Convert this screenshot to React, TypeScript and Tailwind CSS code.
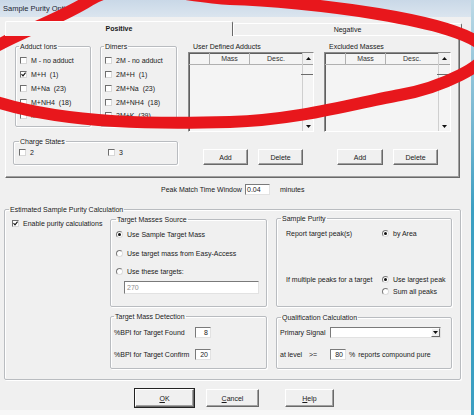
import React from "react";

function CheckBox({ checked, label }: { checked?: boolean; label?: string }) {
  return (
    <div className="flex items-center h-[9px]">
      <span className="flex items-center justify-center w-[7px] h-[7px] bg-white border border-t-[#6e6e6e] border-l-[#6e6e6e] border-r-[#d8d8d8] border-b-[#d8d8d8]">
        {checked && (
          <svg width="5" height="5" viewBox="0 0 5 5">
            <path d="M0.5 2.2 L2 3.8 L4.6 0.6" fill="none" stroke="#111" strokeWidth="1.1" />
          </svg>
        )}
      </span>
      {label && <span className="ml-[4px] whitespace-pre">{label}</span>}
    </div>
  );
}

function Radio({ checked, label }: { checked?: boolean; label?: string }) {
  return (
    <div className="flex items-center h-[9px]">
      <span className="flex items-center justify-center w-[7px] h-[7px] rounded-full bg-white border border-t-[#7a7a7a] border-l-[#7a7a7a] border-r-[#dcdcdc] border-b-[#dcdcdc]">
        {checked && <span className="w-[3px] h-[3px] rounded-full bg-[#111]" />}
      </span>
      {label && <span className="ml-[4px] whitespace-pre">{label}</span>}
    </div>
  );
}

function Btn({ label, className, focus }: { label: React.ReactNode; className: string; focus?: boolean }) {
  return (
    <div
      className={`flex items-center justify-center bg-[#f0f0f0] border border-t-white border-l-white border-r-[#696969] border-b-[#696969] shadow-[inset_-1px_-1px_0_#a0a0a0] ${
        focus ? "outline outline-1 outline-[#222]" : ""
      } ${className}`}
    >
      {label}
    </div>
  );
}

function Group({
  title,
  legendMl,
  className,
  children,
}: {
  title: string;
  legendMl: string;
  className: string;
  children?: React.ReactNode;
}) {
  return (
    <fieldset
      className={`border border-[#b9bcc0] rounded-[2px] shadow-[inset_1px_1px_0_#fff,1px_1px_0_#fff] ${className}`}
    >
      <legend className={`px-px leading-[9px] h-[9px] ${legendMl}`}>{title}</legend>
      {children}
    </fieldset>
  );
}

function TextBox({ value, className, gray }: { value: string; className: string; gray?: boolean }) {
  return (
    <div
      className={`flex items-center bg-white border border-t-[#7a7a7a] border-l-[#7a7a7a] border-r-[#e2e2e2] border-b-[#e2e2e2] ${
        gray ? "text-[#8d8d8d]" : ""
      } ${className}`}
    >
      {value}
    </div>
  );
}

function Arrow({ up }: { up?: boolean }) {
  return (
    <svg width="5" height="3" viewBox="0 0 5 3">
      <polygon points={up ? "0,3 5,3 2.5,0" : "0,0 5,0 2.5,3"} fill="#111" />
    </svg>
  );
}

function ListBox({ cols }: { cols: [string, string, string, string] }) {
  return (
    <div className="flex h-[80px] bg-[#f4f4f4] border border-t-[#8a8a8a] border-l-[#8a8a8a] border-r-white border-b-white shadow-[inset_1px_1px_0_#5f5f5f]">
      <div className="flex-1 flex flex-col">
        <div className="flex h-[12px] border-b border-[#b0b0b0] text-[#333]">
          <div className={`${cols[0]} border-r border-[#b0b0b0]`} />
          <div className={`${cols[1]} border-r border-[#b0b0b0] flex items-center justify-center`}>Mass</div>
          <div className={`${cols[2]} flex items-center justify-center`}>Desc.</div>
        </div>
      </div>
      <div className={`${cols[3]} flex flex-col border-l border-[#cfcfcf]`}>
        <div className="h-[12px] flex items-center justify-center border-b border-[#a0a0a0] bg-[#f0f0f0]">
          <Arrow up />
        </div>
        <div className="h-[10px] border-b border-[#6b6b6b] -ml-[2px]" />
        <div className="flex-1" />
        <div className="h-[9px] flex items-center justify-center">
          <Arrow />
        </div>
      </div>
    </div>
  );
}

export default function App() {
  return (
    <div className="relative w-[474px] h-[415px] overflow-hidden flex bg-[#f0f0f0] text-[7px] leading-[9px] text-[#1a1a1a] font-['Liberation_Sans',Arial,sans-serif]">
      <div className="w-[471px] flex flex-col">
        {/* title bar */}
        <div className="h-[17px] px-[3px] flex items-center bg-gradient-to-b from-[#c9d8e7] to-[#dbe5ef] text-[7.5px] text-[#1d2633]">
          Sample Purity Options
        </div>

        <div className="flex-1 flex flex-col">
          {/* tab control */}
          <div className="mt-[4px] ml-[5px] w-[457px]">
            <div className="flex items-end h-[14px]">
              <div className="relative z-10 -mb-px w-[228px] h-[15px] pb-px flex items-center justify-center font-bold bg-[#f0f0f0] border border-b-0 border-t-white border-l-white border-r-[#696969] rounded-t-[2px]">
                Positive
              </div>
              <div className="w-[229px] h-[12px] flex items-center justify-center bg-[#f0f0f0] border border-b-0 border-t-white border-l-white border-r-[#696969] rounded-t-[2px]">
                Negative
              </div>
            </div>
            <div className="w-[455px] h-[143px] border border-t-white border-l-white border-r-[#696969] border-b-[#696969] shadow-[inset_-1px_-1px_0_#a0a0a0] flex flex-col">
              <div className="flex items-start mt-[6px]">
                <Group title="Adduct Ions" legendMl="ml-[3px]" className="ml-[9px] w-[76px] h-[85px]">
                  <div className="flex flex-col pt-[3px] pl-[4px]">
                    {[
                      ["M - no adduct", false],
                      ["M+H  (1)", true],
                      ["M+Na  (23)", false],
                      ["M+NH4  (18)", false],
                      ["M+K  (39)", false],
                    ].map(([l, c]) => (
                      <div key={l as string} className="h-[13.75px] flex items-center">
                        <CheckBox label={l as string} checked={c as boolean} />
                      </div>
                    ))}
                  </div>
                </Group>
                <Group title="Dimers" legendMl="ml-[3px]" className="ml-[9px] w-[77px] h-[85px]">
                  <div className="flex flex-col pt-[3px] pl-[4px]">
                    {["2M - no adduct", "2M+H  (1)", "2M+Na  (23)", "2M+NH4  (18)", "2M+K  (39)"].map((l) => (
                      <div key={l} className="h-[13.75px] flex items-center">
                        <CheckBox label={l} />
                      </div>
                    ))}
                  </div>
                </Group>
                <div className="ml-[11px] w-[126px] flex flex-col">
                  <div className="pl-[5px] h-[9px]">User Defined Adducts</div>
                  <div className="mt-[1px]">
                    <ListBox cols={["w-[21px]", "w-[40px]", "w-[52px]", "w-[11px]"]} />
                  </div>
                </div>
                <div className="ml-[10px] w-[127px] flex flex-col">
                  <div className="pl-[5px] h-[9px]">Excluded Masses</div>
                  <div className="mt-[1px]">
                    <ListBox cols={["w-[21px]", "w-[40px]", "w-[52px]", "w-[12px]"]} />
                  </div>
                </div>
              </div>

              <div className="flex items-start mt-[5px]">
                <Group title="Charge States" legendMl="ml-[5px]" className="ml-[7px] w-[165px] h-[28px]">
                  <div className="flex pl-[5px] mt-[2px]">
                    <div className="w-[89px]">
                      <CheckBox label="2" />
                    </div>
                    <CheckBox label="3" />
                  </div>
                </Group>
                <Btn label="Add" className="ml-[25px] mt-[12px] w-[45px] h-[16px]" />
                <Btn label="Delete" className="ml-[10px] mt-[12px] w-[45px] h-[16px]" />
                <Btn label="Add" className="ml-[34px] mt-[12px] w-[46px] h-[16px]" />
                <Btn label="Delete" className="ml-[10px] mt-[12px] w-[45px] h-[16px]" />
              </div>
            </div>
          </div>

          {/* peak match */}
          <div className="flex items-center mt-[6px] h-[11px] pl-[161px]">
            <span className="w-[81px]">Peak Match Time Window</span>
            <TextBox value="0.04" className="ml-[3px] w-[25px] h-[11px] pl-[1px]" />
            <span className="ml-[10px]">minutes</span>
          </div>

          {/* estimated purity */}
          <Group
            title="Estimated Sample Purity Calculation"
            legendMl="ml-[4px]"
            className="mt-[10px] ml-[4px] w-[457px] h-[175px]"
          >
            <div className="flex">
              <div className="w-[105px] pl-[7px] pt-[5px]">
                <CheckBox checked label="Enable purity calculations" />
              </div>
              <div className="w-[157px] flex flex-col">
                <Group title="Target Masses Source" legendMl="ml-[5px]" className="mt-[1px] h-[92px]">
                  <div className="flex flex-col pl-[5px] pt-[6px]">
                    <Radio checked label="Use Sample Target Mass" />
                    <div className="mt-[10px]">
                      <Radio label="Use target mass from Easy-Access" />
                    </div>
                    <div className="mt-[9px]">
                      <Radio label="Use these targets:" />
                    </div>
                    <TextBox value="270" gray className="mt-[5px] ml-[8px] w-[135px] h-[13px] pl-[2px]" />
                  </div>
                </Group>
                <Group title="Target Mass Detection" legendMl="ml-[3px]" className="mt-[5px] h-[57px]">
                  <div className="flex flex-col pl-[3px]">
                    <div className="flex items-center h-[11px] mt-[6px]">
                      <span className="w-[81px]">%BPI for Target Found</span>
                      <TextBox value="8" className="w-[16px] h-[11px] justify-end pr-[2px]" />
                    </div>
                    <div className="flex items-center h-[11px] mt-[11px]">
                      <span className="w-[81px]">%BPI for Target Confirm</span>
                      <TextBox value="20" className="w-[16px] h-[11px] justify-end pr-[2px]" />
                    </div>
                  </div>
                </Group>
              </div>
              <div className="ml-[9px] w-[176px] flex flex-col">
                <Group title="Sample Purity" legendMl="ml-[4px]" className="h-[93px]">
                  <div className="flex flex-col pl-[9px]">
                    <div className="flex items-center mt-[6px]">
                      <span className="w-[96px]">Report target peak(s)</span>
                      <Radio checked label="by Area" />
                    </div>
                    <div className="flex items-center mt-[37px]">
                      <span className="w-[96px]">If multiple peaks for a target</span>
                      <Radio checked label="Use largest peak" />
                    </div>
                    <div className="flex items-center mt-[3px] pl-[96px]">
                      <Radio label="Sum all peaks" />
                    </div>
                  </div>
                </Group>
                <Group title="Qualification Calculation" legendMl="ml-[4px]" className="mt-[6px] h-[56px]">
                  <div className="flex flex-col pl-[3px]">
                    <div className="flex items-center h-[11px] mt-[5px]">
                      <span className="w-[50px]">Primary Signal</span>
                      <div className="w-[111px] h-[11px] flex justify-end bg-white border border-t-[#7a7a7a] border-l-[#7a7a7a] border-r-[#e2e2e2] border-b-[#e2e2e2]">
                        <div className="w-[9px] h-[9px] flex items-center justify-center bg-[#f0f0f0] border border-t-white border-l-white border-r-[#696969] border-b-[#696969]">
                          <Arrow />
                        </div>
                      </div>
                    </div>
                    <div className="flex items-center h-[11px] mt-[11px]">
                      <span className="w-[29px]">at level</span>
                      <span className="w-[21px]">&gt;=</span>
                      <TextBox value="80" className="w-[16px] h-[11px] justify-end pr-[2px]" />
                      <span className="ml-[3px]">%</span>
                      <span className="ml-[3px]">reports compound pure</span>
                    </div>
                  </div>
                </Group>
              </div>
            </div>
          </Group>

          {/* dialog buttons */}
          <div className="flex mt-[9px] h-[18px]">
            <Btn
              focus
              label={
                <span>
                  <u>O</u>K
                </span>
              }
              className="ml-[135px] w-[59px] h-[18px]"
            />
            <Btn
              label={
                <span>
                  <u>C</u>ancel
                </span>
              }
              className="ml-[12px] w-[53px] h-[18px]"
            />
            <Btn
              label={
                <span>
                  <u>H</u>elp
                </span>
              }
              className="ml-[26px] w-[49px] h-[18px]"
            />
          </div>
          <div className="flex-1 mt-[3px] bg-[#f7f7f7]" />
        </div>
      </div>
      <div className="w-[3px] bg-gradient-to-b from-[#bcd9e6] via-[#3c9fc2] to-[#3c9fc2]" />

      {/* red annotation ellipse */}
      <svg
        className="absolute left-0 top-0 pointer-events-none"
        width="474"
        height="415"
        viewBox="0 0 474 415"
      >
        <path
          d="M -30 72 C -30 48, 50 26, 90 0 C 125 -22, 180 -4, 230 -1 C 300 1, 470 20, 485 50 C 492 64, 440 88, 400 95 C 360 102, 300 120, 230 122 C 160 124, 70 124, 0 103 C -20 98, -30 85, -30 72 Z"
          fill="none"
          stroke="#e8171c"
          strokeWidth="12"
        />
      </svg>
    </div>
  );
}
